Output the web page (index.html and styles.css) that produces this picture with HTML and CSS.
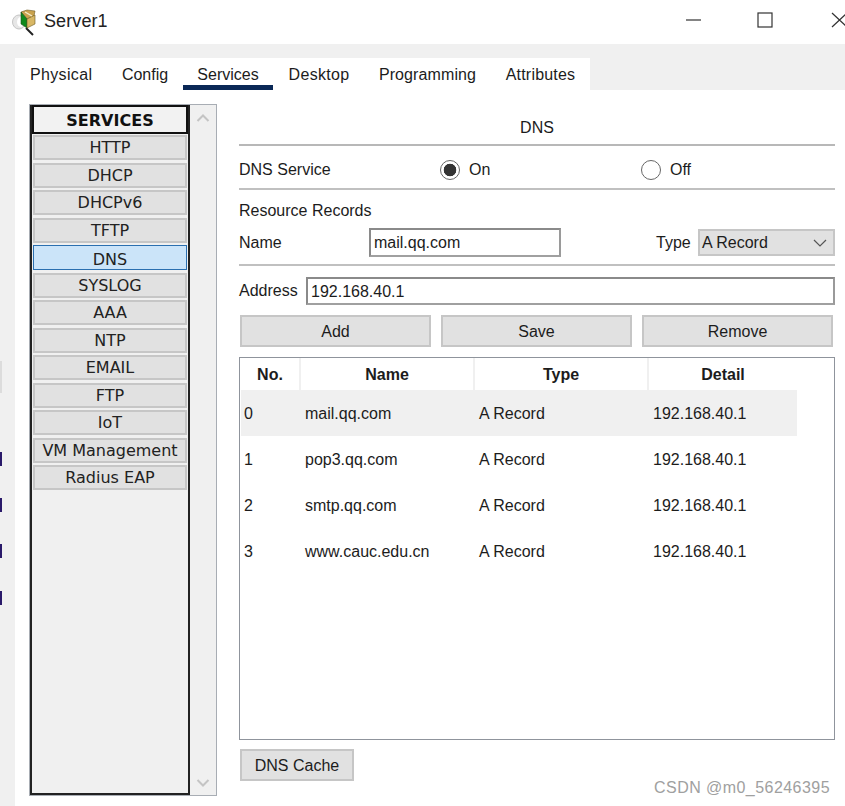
FILE: index.html
```html
<!DOCTYPE html>
<html lang="en">
<head>
<meta charset="utf-8">
<title>Server1</title>
<link rel="stylesheet" href="styles.css">
</head>
<body>
<header class="titlebar">
  <svg class="app-icon" width="28" height="28" viewBox="0 0 28 28">
    <ellipse cx="7" cy="14" rx="6.5" ry="7" fill="#e6e6e6" stroke="#c4c4c4"/>
    <ellipse cx="9" cy="14" rx="4" ry="5" fill="#fff"/>
    <path d="M14 20l7 7" stroke="#222" stroke-width="2"/>
    <path d="M9 4l6-2 8 1-1 5-7 3z" fill="#c9a24e" stroke="#6d5a24" stroke-width=".6"/>
    <path d="M9 4l6 7v9l-6-4z" fill="#0f8a1c" stroke="#1d4f1d" stroke-width=".6"/>
    <path d="M15 11l8-4v9l-8 4z" fill="#d8b765" stroke="#6d5a24" stroke-width=".6"/>
    <path d="M13 4l7 4" stroke="#f6ecc8" stroke-width="1.4"/>
  </svg>
  <span class="app-title">Server1</span>
  <div class="window-controls">
    <svg class="ctl-min" width="16" height="16" viewBox="0 0 16 16"><path d="M1 8h15" stroke="#333" stroke-width="1.2"/></svg>
    <svg class="ctl-max" width="16" height="16" viewBox="0 0 16 16"><rect x="1" y="1" width="14" height="14" fill="none" stroke="#333" stroke-width="1.2"/></svg>
    <svg class="ctl-close" width="16" height="16" viewBox="0 0 16 16"><path d="M1 1l15 14M16 1L1 15" stroke="#333" stroke-width="1.2"/></svg>
  </div>
</header>

<div class="shell">
  <nav class="tabs">
    <span class="tab tab-physical">Physical</span>
    <span class="tab tab-config">Config</span>
    <span class="tab tab-services active">Services</span>
    <span class="tab tab-desktop">Desktop</span>
    <span class="tab tab-programming">Programming</span>
    <span class="tab tab-attributes">Attributes</span>
  </nav>

  <main class="content">
    <aside class="sidebar">
      <div class="service-list">
        <div class="service-head">SERVICES</div>
        <div class="service-item">HTTP</div>
        <div class="service-item">DHCP</div>
        <div class="service-item">DHCPv6</div>
        <div class="service-item">TFTP</div>
        <div class="service-item selected">DNS</div>
        <div class="service-item">SYSLOG</div>
        <div class="service-item">AAA</div>
        <div class="service-item">NTP</div>
        <div class="service-item">EMAIL</div>
        <div class="service-item">FTP</div>
        <div class="service-item">IoT</div>
        <div class="service-item">VM Management</div>
        <div class="service-item">Radius EAP</div>
      </div>
      <div class="scrollbar">
        <svg width="14" height="8" viewBox="0 0 14 8"><path d="M1.5 7L7 1.5 12.5 7" fill="none" stroke="#c4c4c4" stroke-width="2"/></svg>
        <svg width="14" height="8" viewBox="0 0 14 8"><path d="M1.5 1L7 6.5 12.5 1" fill="none" stroke="#c4c4c4" stroke-width="2"/></svg>
      </div>
    </aside>

    <section class="dns">
      <h1 class="dns-title">DNS</h1>
      <div class="row row-service">
        <span class="lbl lbl-service">DNS Service</span>
        <label class="radio radio-on"><span class="dot on"></span>On</label>
        <label class="radio radio-off"><span class="dot"></span>Off</label>
      </div>
      <div class="records-title">Resource Records</div>
      <div class="row row-name">
        <span class="lbl lbl-name">Name</span>
        <div class="field field-name">mail.qq.com</div>
        <span class="lbl lbl-type">Type</span>
        <div class="select">A Record
          <svg width="14" height="8" viewBox="0 0 14 8"><path d="M1 1l6 6 6-6" fill="none" stroke="#555" stroke-width="1.2"/></svg>
        </div>
      </div>
      <div class="row row-address">
        <span class="lbl lbl-address">Address</span>
        <div class="field field-address">192.168.40.1</div>
      </div>
      <div class="actions">
        <div class="btn">Add</div>
        <div class="btn">Save</div>
        <div class="btn">Remove</div>
      </div>
      <div class="table">
        <div class="tr th">
          <div>No.</div><div>Name</div><div>Type</div><div>Detail</div>
        </div>
        <div class="tr td first"><div>0</div><div>mail.qq.com</div><div>A Record</div><div>192.168.40.1</div></div>
        <div class="tr td"><div>1</div><div>pop3.qq.com</div><div>A Record</div><div>192.168.40.1</div></div>
        <div class="tr td"><div>2</div><div>smtp.qq.com</div><div>A Record</div><div>192.168.40.1</div></div>
        <div class="tr td"><div>3</div><div>www.cauc.edu.cn</div><div>A Record</div><div>192.168.40.1</div></div>
      </div>
      <div class="btn btn-cache">DNS Cache</div>
    </section>
  </main>
</div>
<div class="edge-mark mark-a"></div>
<div class="edge-mark mark-b"></div>
<div class="edge-mark mark-c"></div>
<div class="edge-mark mark-d"></div>
<div class="edge-strip"></div>
<div class="watermark">CSDN @m0_56246395</div>
</body>
</html>
```
FILE: styles.css
```css
* { box-sizing: border-box; }
html, body { margin: 0; padding: 0; }
body {
  width: 845px;
  height: 806px;
  overflow: hidden;
  position: relative;
  background: #f0f0f0;
  font-family: "Liberation Sans", Arial, sans-serif;
  font-size: 16px;
  color: #1c1c1c;
}

.titlebar {
  height: 44px;
  background: #fff;
  display: flex;
  align-items: center;
  padding-left: 12px;
}
.app-icon { margin-right: 4px; margin-top: 0; }
.app-title { font-size: 18px; color: #222; margin-top: -2px; letter-spacing: .1px; }
.window-controls { margin-left: auto; display: flex; align-items: center; margin-top: -4px; }
.ctl-min { margin-right: 56px; margin-top: 0; }
.ctl-max { margin-right: 58px; }
.ctl-close { margin-right: -2px; }

.shell { padding: 14px 0 0 15px; }

.tabs {
  width: 575px;
  height: 32px;
  background: #fff;
  display: flex;
  align-items: flex-start;
}
.tab { display: block; height: 32px; line-height: 34px; text-align: center; white-space: nowrap; }
.tab-physical { width: 92px; padding-left: 15px; text-align: left; letter-spacing: .35px; }
.tab-config { width: 76px; }
.tab-services { width: 90px; border-bottom: 5px solid #0a2856; }
.tab-desktop { width: 91px; padding-left: 1px; letter-spacing: .3px; }
.tab-programming { width: 127px; letter-spacing: .1px; }
.tab-attributes { width: 99px; letter-spacing: .2px; }

.content {
  height: 716px;
  background: #fff;
  display: flex;
  padding: 14px 10px 0 14px;
}

.sidebar {
  width: 188px;
  height: 692px;
  display: flex;
  border: 1px solid #a8adb4;
  flex: none;
}
.service-list {
  width: 160px;
  background: #f0f0f0;
  border: 2px solid #222;
  border-top: none;
  display: flex;
  flex-direction: column;
  font-family: "DejaVu Sans", Verdana, sans-serif;
  font-size: 16px;
  padding: 0 1px;
}
.service-head {
  height: 29px;
  margin: 0 -1px;
  border: 2px solid #111;
  background: #f2f2f2;
  font-weight: bold;
  font-size: 16px;
  text-align: center;
  line-height: 28px;
  color: #111;
  white-space: nowrap;
}
.service-item {
  height: 25px;
  margin-top: 2.5px;
  background: #e1e1e1;
  border: 2px solid #c6c6c6;
  text-align: center;
  line-height: 22.5px;
  white-space: nowrap;
  color: #222;
}
.service-head + .service-item { margin-top: 1px; }
.service-item.selected { background: #cbe4f9; border: 1.5px solid #2a6fb0; line-height: 27px; }

.scrollbar {
  flex: 1;
  background: #f0f0f0;
  display: flex;
  flex-direction: column;
  justify-content: space-between;
  align-items: center;
  padding: 9px 0 8px;
}

.dns {
  width: 596px;
  margin-left: 22px;
  display: flex;
  flex-direction: column;
}
.dns-title {
  margin: 0;
  height: 42px;
  font-size: 16px;
  font-weight: normal;
  text-align: center;
  line-height: 47px;
  border-bottom: 2px solid #b8b8b8;
}
.row { display: flex; align-items: center; }
.row-service { height: 44px; border-bottom: 2px solid #c0c0c0; }
.lbl-service { width: 201px; }
.lbl { line-height: 20px; }
.row-service .lbl, .row-service .radio { margin-top: 5px; }
.radio { display: flex; align-items: center; gap: 9px; }
.radio-on { width: 201px; }
.dot {
  width: 20px;
  height: 20px;
  border-radius: 50%;
  border: 1.5px solid #666;
  background: #fff;
  display: block;
}
.dot.on { background: radial-gradient(circle, #333 0, #333 6px, #fff 6.6px); }

.records-title { height: 34px; line-height: 41px; }
.row-name { height: 42px; border-bottom: 2px solid #c0c0c0; padding-bottom: 3px; }
.lbl-name { width: 130px; }
.field {
  background: #fff;
  border: 2px solid #8a8a8a;
  border-right-color: #9a9a9a;
  border-bottom-color: #a0a0a0;
  padding-left: 3px;
  white-space: nowrap;
}
.field-name { width: 192px; height: 29px; line-height: 26px; }
.lbl-type { margin-left: 95px; width: 42px; }
.select {
  width: 137px;
  height: 27px;
  background: #e1e1e1;
  border: 2px solid #c6c6c6;
  display: flex;
  align-items: center;
  justify-content: space-between;
  padding: 0 6px 0 2px;
}
.row-address { height: 39px; padding-top: 11px; }
.lbl-address { width: 67px; }
.field-address { width: 529px; height: 28px; line-height: 25px; }

.actions { display: flex; gap: 10px; margin: 10px 0 0 1px; }
.btn {
  width: 191px;
  height: 32px;
  background: #e1e1e1;
  border: 2px solid #c6c6c6;
  text-align: center;
  line-height: 29px;
}

.table {
  width: 596px;
  height: 383px;
  margin-top: 10px;
  border: 1.5px solid #8f949c;
  padding-left: 1px;
}
.tr { display: grid; grid-template-columns: 60px 174px 174px 148px; width: 556px; }
.th { height: 32px; font-weight: bold; text-align: center; line-height: 33px; }
.th > div { border-right: 2px solid #f0f0f0; }
.th > div:last-child { border-right: 0; }
.td { height: 46px; line-height: 47px; white-space: nowrap; }
.td > div { padding-left: 4px; }
.td > div:first-child { padding-left: 3px; }
.td.first { background: #f0f0f0; }

.btn-cache { width: 114px; margin: 9px 0 0 1px; }

.edge-mark { position: absolute; left: 0; width: 2px; height: 14px; background: #2a1a6a; }
.mark-a { top: 452px; }
.mark-b { top: 498px; }
.mark-c { top: 544px; }
.mark-d { top: 591px; }
.edge-strip { position: absolute; left: 0; top: 361px; width: 2px; height: 32px; background: #dcdcdc; }

.watermark {
  position: absolute;
  right: 15px;
  top: 779px;
  font-size: 16px;
  color: #a0a0a0;
  letter-spacing: .45px;
  white-space: nowrap;
}
```
